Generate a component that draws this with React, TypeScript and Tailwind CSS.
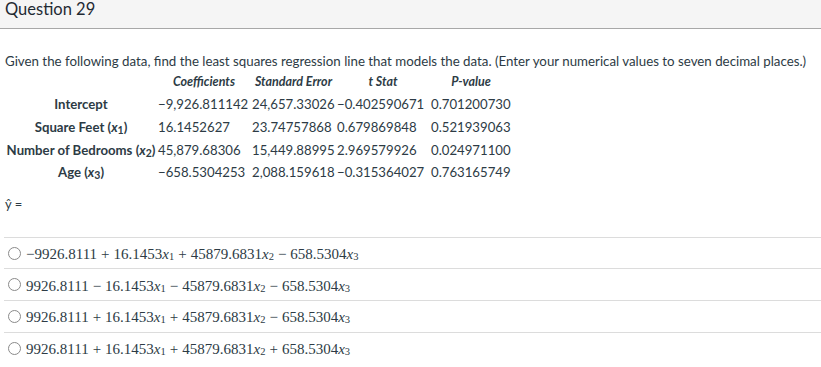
const rows = [
  { label: 'Intercept', sub: '', coef: '−9,926.811142', se: '24,657.33026', t: '−0.402590671', p: '0.701200730' },
  { label: 'Square Feet', sub: '1', coef: '16.1452627', se: '23.74757868', t: '0.679869848', p: '0.521939063' },
  { label: 'Number of Bedrooms', sub: '2', coef: '45,879.68306', se: '15,449.88995', t: '2.969579926', p: '0.024971100' },
  { label: 'Age', sub: '3', coef: '−658.5304253', se: '2,088.159618', t: '−0.315364027', p: '0.763165749' },
];

const options = [
  ['−9926.8111', '+', '16.1453', '+', '45879.6831', '−', '658.5304'],
  ['9926.8111', '−', '16.1453', '−', '45879.6831', '−', '658.5304'],
  ['9926.8111', '+', '16.1453', '+', '45879.6831', '−', '658.5304'],
  ['9926.8111', '+', '16.1453', '+', '45879.6831', '+', '658.5304'],
];

function X({ n }: { n: string }) {
  return (
    <span>
      <span className="italic">x</span>
      <sub className="text-[10.5px] relative top-[1px] align-baseline">{n}</sub>
    </span>
  );
}

function Formula({ parts }: { parts: string[] }) {
  const [a, o1, b, o2, c, o3, d] = parts;
  return (
    <span className="font-['Liberation_Serif',serif] text-[15px] text-[#2d3b45] whitespace-nowrap">
      {a}
      <span className="mx-[4px]">{o1}</span>
      {b}
      <X n="1" />
      <span className="mx-[4px]">{o2}</span>
      {c}
      <X n="2" />
      <span className="mx-[4px]">{o3}</span>
      {d}
      <X n="3" />
    </span>
  );
}

export default function App() {
  return (
    <div className="w-[821px] h-[367px] bg-white font-['Lato','Noto_Sans',sans-serif] text-[#2d3b45] overflow-hidden">
      <div className="h-[29px] bg-[#f5f5f5] border-b border-[#a8a8a8] px-[5px] flex items-center">
        <h2 className="text-[16.5px] leading-none text-[#1f2a33] -mt-[9px]">Question 29</h2>
      </div>

      <div className="pl-[5px]">
        <p className="mt-[22px] text-[13.3px] leading-[20px] whitespace-nowrap">
          Given the following data, find the least squares regression line that models the data. (Enter your numerical values to seven decimal places.)
        </p>

        <div className="text-[13.2px] grid grid-cols-[152px_94px_85px_94px_82px] auto-rows-[22.75px] items-center">
          <div />
          <div className="text-center font-bold italic text-[12.5px]">Coefficients</div>
          <div className="text-center font-bold italic text-[12.5px]">Standard Error</div>
          <div className="text-center font-bold italic text-[12.5px]">t Stat</div>
          <div className="text-center font-bold italic text-[12.5px]">P-value</div>
          {rows.map((r) => (
            <div key={r.label} className="contents">
              <div className="text-center font-bold whitespace-nowrap">
                {r.label}
                {r.sub && (
                  <>
                    {' ('}
                    <span className="italic">x</span>
                    <sub className="text-[10.5px] align-baseline relative top-[2px]">{r.sub}</sub>
                    {')'}
                  </>
                )}
              </div>
              <div className="pl-[1px] whitespace-nowrap">{r.coef}</div>
              <div className="pl-[1px] whitespace-nowrap">{r.se}</div>
              <div className="pl-[1px] whitespace-nowrap">{r.t}</div>
              <div className="pl-[1px] whitespace-nowrap">{r.p}</div>
            </div>
          ))}
        </div>

        <div className="mt-[10px] h-[20px] flex items-center text-[13px]">ŷ =</div>
      </div>

      <ul className="mt-[22px] ml-[4px]">
        {options.map((o, i) => (
          <li key={i} className="h-[31.7px] border-t border-[#dcdcdc] flex items-center pl-[4px]">
            <span className="w-[13px] h-[13px] rounded-full border border-[#8a8a8a] bg-white shrink-0" />
            <span className="ml-[5px]">
              <Formula parts={o} />
            </span>
          </li>
        ))}
      </ul>
    </div>
  );
}
